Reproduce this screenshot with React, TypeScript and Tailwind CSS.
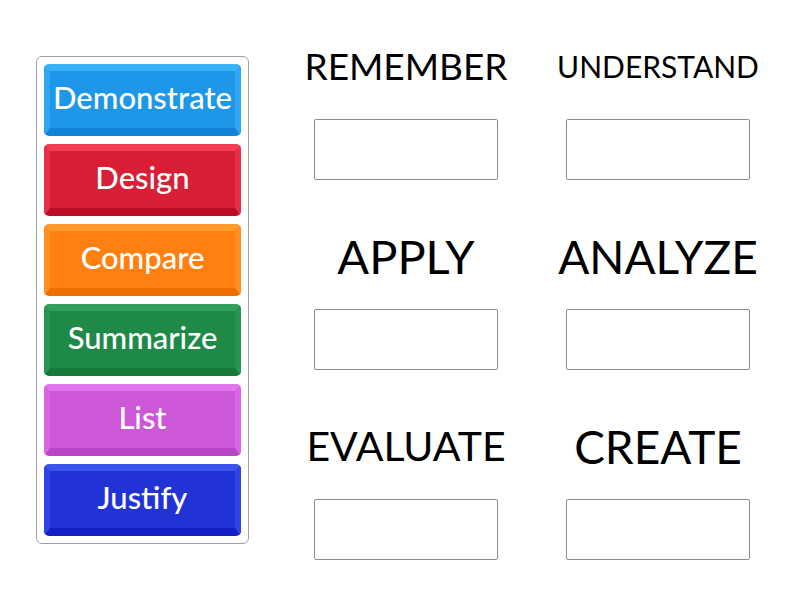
const tiles = [
  { label: 'Demonstrate', cls: 'bg-[#1f97e8] border-t-[#3ab2f8] border-x-[#2ea6f2] border-b-[#1283d8]' },
  { label: 'Design', cls: 'bg-[#d81f35] border-t-[#f23c52] border-x-[#e6304a] border-b-[#bd0e28]' },
  { label: 'Compare', cls: 'bg-[#ff8010] border-t-[#ff9a2c] border-x-[#ff8f22] border-b-[#ee6e00]' },
  { label: 'Summarize', cls: 'bg-[#1f8a48] border-t-[#31a05c] border-x-[#289652] border-b-[#16783a]' },
  { label: 'List', cls: 'bg-[#cc58d8] border-t-[#e274ee] border-x-[#d866e4] border-b-[#b746c4]' },
  { label: 'Justify', cls: 'bg-[#2233d6] border-t-[#3c54ee] border-x-[#2f44e4] border-b-[#121fc4]' },
];

const targets = [
  { label: 'REMEMBER', size: 'text-[37px]' },
  { label: 'UNDERSTAND', size: 'text-[30px]' },
  { label: 'APPLY', size: 'text-[47px]' },
  { label: 'ANALYZE', size: 'text-[46px]' },
  { label: 'EVALUATE', size: 'text-[41px]' },
  { label: 'CREATE', size: 'text-[46px]' },
];

export default function App() {
  return (
    <div className="w-[800px] h-[600px] bg-white flex font-['Lato',sans-serif]">
      <div className="ml-[36px] mt-[56px] w-[213px] h-[488px] border border-[#a0a0a0] rounded-[6px] p-[7px] flex flex-col gap-[8px]">
        {tiles.map((t) => (
          <div
            key={t.label}
            className={`h-[72px] rounded-[5px] border-t-[7px] border-x-[6px] border-b-[8px] flex items-center justify-center text-white text-[31px] font-medium ${t.cls}`}
          >
            <span className="-mt-[4px]">{t.label}</span>
          </div>
        ))}
      </div>

      <div className="ml-[65px] mt-[28px] grid grid-cols-[184px_184px] gap-x-[68px] gap-y-[38px] content-start">
        {targets.map((t) => (
          <div key={t.label} className="flex flex-col items-center">
            <div className={`h-[80px] w-full pb-[4px] flex items-center justify-center whitespace-nowrap text-black font-normal ${t.size}`}>
              {t.label}
            </div>
            <div className="mt-[11px] w-[184px] h-[61px] border border-[#8c8c8c] rounded-[2px] bg-white" />
          </div>
        ))}
      </div>
    </div>
  );
}
